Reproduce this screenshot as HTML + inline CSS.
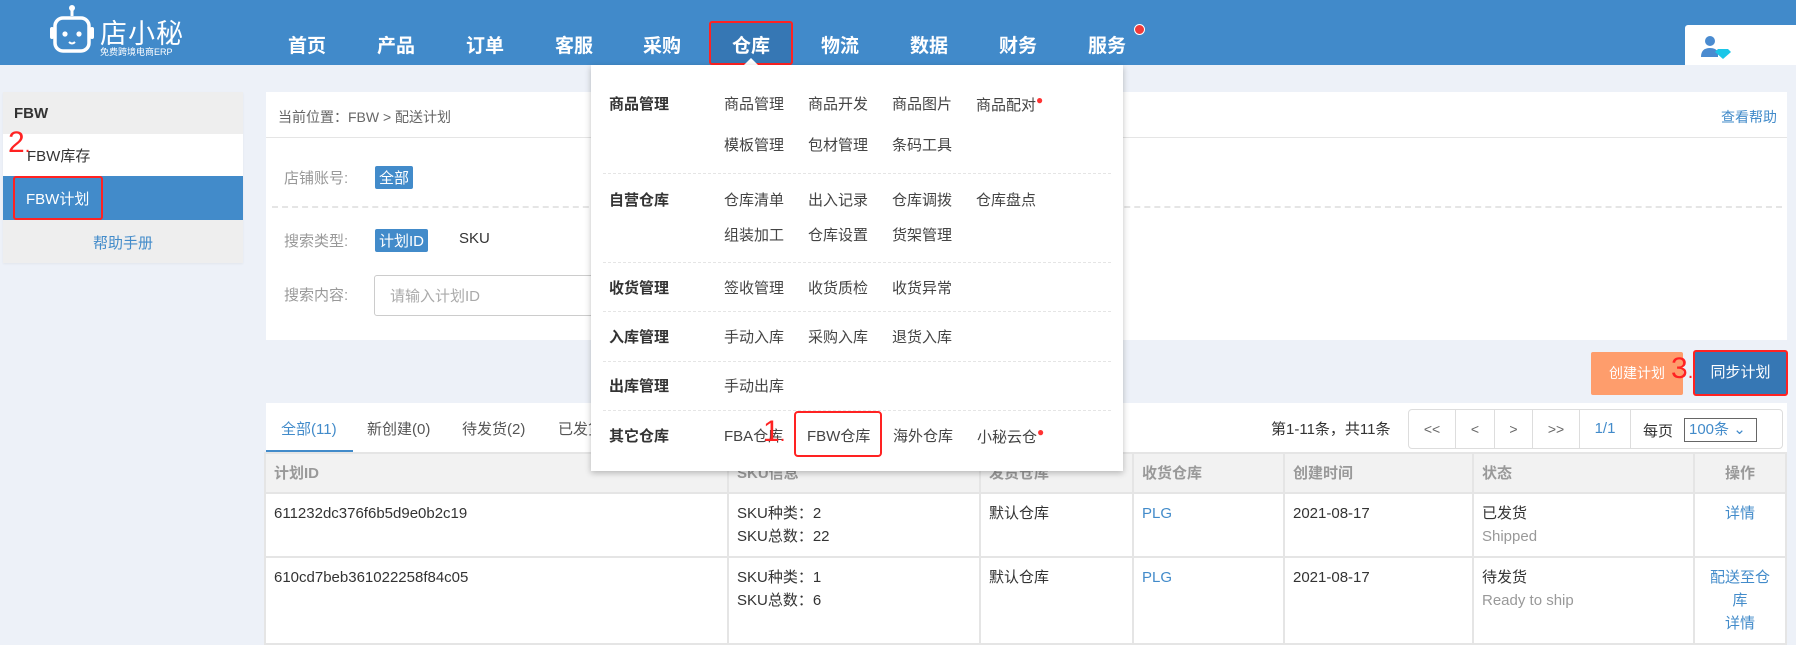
<!DOCTYPE html>
<html><head><meta charset="utf-8"><style>
*{margin:0;padding:0;box-sizing:border-box}
body{width:1796px;height:643px;overflow:hidden;background:#edf1f8;font-family:"Liberation Sans","Noto Sans CJK SC",sans-serif;font-size:15px;color:#333;position:relative}
.a{position:absolute;white-space:nowrap}
#hd{position:absolute;left:0;top:0;width:1796px;height:65px;background:#418aca}
.nav{position:absolute;top:31px;color:#fff;font-weight:bold;font-size:19px;width:80px;text-align:center;transform:translateX(-40px)}
.lbl{color:#999}
.blue{color:#428bca}
.tag{background:#428bca;color:#fff;padding:1px 4px;border-radius:2px}
.dd{position:absolute;left:591px;top:65px;width:532px;height:406px;background:#fff;box-shadow:0 2px 6px rgba(0,0,0,.25);z-index:5}
.dd .c{position:absolute;font-weight:bold;left:18px;font-size:15px;color:#333}
.dd .i{position:absolute;font-size:15px;color:#444}
.dd .hr{position:absolute;left:12px;right:12px;border-top:1px dashed #e5e5e5}
.rd{color:#f22;font-size:30px;position:absolute;font-family:"Liberation Sans",sans-serif}
table{border-collapse:collapse}
.tb td,.tb th{border:2px solid #e5e5e5;vertical-align:top;text-align:left;font-weight:normal;padding:8px 8px}
</style></head><body>
<div id="hd">
 <svg class="a" style="left:48px;top:5px" width="50" height="52" viewBox="0 0 50 52"><line x1="24" y1="2" x2="24" y2="11" stroke="#fff" stroke-width="3"/><circle cx="24" cy="3" r="3" fill="#fff"/><rect x="7" y="13" width="34" height="33" rx="8" fill="none" stroke="#fff" stroke-width="3.5"/><rect x="2" y="22" width="4" height="12" rx="2" fill="#fff"/><rect x="42" y="22" width="4" height="12" rx="2" fill="#fff"/><circle cx="17" cy="29" r="2.6" fill="#fff"/><circle cx="31" cy="29" r="2.6" fill="#fff"/><path d="M21 37 q3 3 6 0" stroke="#fff" stroke-width="2" fill="none"/></svg>
 <div class="a" style="left:100px;top:12px;color:#fff;font-size:27px;letter-spacing:1px">店小秘</div>
 <div class="a" style="left:100px;top:45px;color:#fff;font-size:9px">免费跨境电商ERP</div>
 <div class="a" style="left:709px;top:21px;width:84px;height:44px;background:#3677b4;border:2px solid #f22;border-radius:3px"></div>
 <div class="a" style="left:744px;top:58px;width:0;height:0;border-left:7px solid transparent;border-right:7px solid transparent;border-bottom:7px solid #fff"></div>
 <div class="nav" style="left:307px">首页</div><div class="nav" style="left:396px">产品</div><div class="nav" style="left:485px">订单</div><div class="nav" style="left:574px">客服</div><div class="nav" style="left:662px">采购</div><div class="nav" style="left:751px">仓库</div><div class="nav" style="left:840px">物流</div><div class="nav" style="left:929px">数据</div><div class="nav" style="left:1018px">财务</div><div class="nav" style="left:1107px">服务</div>
 <div class="a" style="left:1134px;top:24px;width:11px;height:11px;border-radius:50%;background:#f03a3a;border:1px solid #fff"></div>
 <div class="a" style="left:1685px;top:25px;width:111px;height:40px;background:#fff;border-radius:3px 0 0 0"></div>
 <svg class="a" style="left:1700px;top:35px" width="32" height="24" viewBox="0 0 32 24"><circle cx="10" cy="6" r="5" fill="#4a8bd0"/><path d="M1 22 q0-9 9-9 q6 0 8 4 l0 5z" fill="#4a8bd0"/><path d="M18 14 h10 l3 3 -8 7 -8-7z" fill="#1bc6e8"/></svg>
</div>

<!-- sidebar -->
<div class="a" style="left:3px;top:92px;width:240px;height:171px;background:#eee;box-shadow:0 1px 2px rgba(0,0,0,.05)">
 <div class="a" style="left:11px;top:13px;font-weight:bold;font-size:15px">FBW</div>
 <div class="a" style="left:0;top:42px;width:240px;height:42px;background:#fff"><span class="a" style="left:24px;top:11px;font-size:15px">FBW库存</span></div>
 <div class="a" style="left:0;top:84px;width:240px;height:44px;background:#428bca"><span class="a" style="left:10px;top:0;width:90px;height:44px;border:2px solid #f22;border-radius:3px"></span><span class="a" style="left:23px;top:12px;color:#fff;font-size:15px">FBW计划</span></div>
 <div class="a blue" style="left:0;top:140px;width:240px;text-align:center;font-size:15px">帮助手册</div>
</div>
<div class="rd" style="left:8px;top:128px;font-size:30px;line-height:30px">2<span style="font-size:20px">.</span></div>

<!-- top panel -->
<div class="a" style="left:266px;top:92px;width:1521px;height:248px;background:#fff">
 <div class="a" style="left:12px;top:15px;color:#666;font-size:14px">当前位置：FBW &gt; 配送计划</div>
 <div class="a blue" style="right:10px;top:15px;font-size:14px">查看帮助</div>
 <div class="a" style="left:0;top:45px;width:1521px;border-top:1px solid #e5e5e5"></div>
 <div class="a lbl" style="left:18px;top:75px">店铺账号:</div><div class="a tag" style="left:109px;top:74px">全部</div>
 <div class="a" style="left:6px;top:114px;width:1510px;border-top:2px dashed #e5e5e5"></div>
 <div class="a lbl" style="left:18px;top:138px">搜索类型:</div><div class="a tag" style="left:109px;top:137px">计划ID</div><div class="a" style="left:193px;top:138px">SKU</div>
 <div class="a lbl" style="left:18px;top:192px">搜索内容:</div>
 <div class="a" style="left:108px;top:183px;width:400px;height:41px;border:1px solid #ccc;border-radius:3px;color:#aaa;padding:9px 15px">请输入计划ID</div>
</div>

<div class="a" style="left:1591px;top:352px;width:92px;height:43px;background:#fe9d6c;color:#fff;text-align:center;line-height:43px;font-size:14px;border-radius:2px">创建计划</div>
<div class="a" style="left:1693px;top:350px;width:95px;height:46px;background:#3677b4;border:2px solid #f22;border-radius:3px;color:#fff;text-align:center;line-height:42px;font-size:15px">同步计划</div>
<div class="rd" style="left:1671px;top:354px;font-size:30px;line-height:30px">3<span style="font-size:20px">.</span></div>

<!-- table panel -->
<div class="a" style="left:266px;top:403px;width:1521px;height:240px;background:#fff">
 <div class="a blue" style="left:15px;top:15px">全部(11)</div><div class="a" style="left:0;top:47px;width:87px;height:3px;background:#428bca"></div>
 <div class="a" style="left:101px;top:15px;color:#555">新创建(0)</div>
 <div class="a" style="left:196px;top:15px;color:#555">待发货(2)</div>
 <div class="a" style="left:292px;top:15px;color:#555">已发货</div>
 <div class="a" style="left:0;top:49px;width:1521px;border-top:2px solid #e5e5e5"></div>
 <div class="a" style="left:1005px;top:15px">第1-11条，共11条</div>
 <div class="a" style="left:1142px;top:6px;width:375px;height:40px;border:1px solid #ddd;border-radius:4px;font-size:14px;color:#666">
  <span class="a" style="left:0;top:0;width:47px;height:38px;border-right:1px solid #ddd;text-align:center;line-height:38px">&lt;&lt;</span>
  <span class="a" style="left:47px;top:0;width:39px;height:38px;border-right:1px solid #ddd;text-align:center;line-height:38px">&lt;</span>
  <span class="a" style="left:86px;top:0;width:38px;height:38px;border-right:1px solid #ddd;text-align:center;line-height:38px">&gt;</span>
  <span class="a" style="left:124px;top:0;width:47px;height:38px;border-right:1px solid #ddd;text-align:center;line-height:38px">&gt;&gt;</span>
  <span class="a blue" style="left:171px;top:0;width:51px;height:38px;border-right:1px solid #ddd;text-align:center;line-height:38px;font-size:15px">1/1</span>
  <span class="a" style="left:234px;top:10px;color:#333;font-size:15px">每页</span>
  <span class="a blue" style="left:275px;top:8px;width:73px;height:24px;border:1px solid #666;font-size:15px;padding-left:4px;line-height:22px">100条 ⌄</span>
 </div>
 <table class="tb a" style="left:-2px;top:49px;width:1523px">
  <tr style="height:40px;background:#f2f2f2;color:#999;font-weight:bold"><th style="width:463px;font-weight:bold">计划ID</th><th style="width:252px;font-weight:bold">SKU信息</th><th style="width:153px;font-weight:bold">发货仓库</th><th style="width:151px;font-weight:bold">收货仓库</th><th style="width:189px;font-weight:bold">创建时间</th><th style="width:221px;font-weight:bold">状态</th><th style="text-align:center;font-weight:bold">操作</th></tr>
  <tr style="height:61px;line-height:23px"><td>611232dc376f6b5d9e0b2c19</td><td>SKU种类：2<br>SKU总数：22</td><td>默认仓库</td><td class="blue">PLG</td><td>2021-08-17</td><td>已发货<br><span style="color:#999">Shipped</span></td><td class="blue" style="text-align:center">详情</td></tr>
  <tr style="height:86px;line-height:23px"><td>610cd7beb361022258f84c05</td><td>SKU种类：1<br>SKU总数：6</td><td>默认仓库</td><td class="blue">PLG</td><td>2021-08-17</td><td>待发货<br><span style="color:#999">Ready to ship</span></td><td class="blue" style="text-align:center;padding:8px 2px">配送至仓<br>库<br>详情</td></tr>
 </table>
</div>

<!-- dropdown -->
<div class="dd">
 <div class="c" style="top:28px">商品管理</div>
 <div class="i" style="left:133px;top:28px">商品管理</div><div class="i" style="left:217px;top:28px">商品开发</div><div class="i" style="left:301px;top:28px">商品图片</div><div class="i" style="left:385px;top:28px">商品配对<sup style="color:#f33;font-size:12px">●</sup></div>
 <div class="i" style="left:133px;top:69px">模板管理</div><div class="i" style="left:217px;top:69px">包材管理</div><div class="i" style="left:301px;top:69px">条码工具</div>
 <div class="hr" style="top:108px"></div>
 <div class="c" style="top:124px">自营仓库</div>
 <div class="i" style="left:133px;top:124px">仓库清单</div><div class="i" style="left:217px;top:124px">出入记录</div><div class="i" style="left:301px;top:124px">仓库调拨</div><div class="i" style="left:385px;top:124px">仓库盘点</div>
 <div class="i" style="left:133px;top:159px">组装加工</div><div class="i" style="left:217px;top:159px">仓库设置</div><div class="i" style="left:301px;top:159px">货架管理</div>
 <div class="hr" style="top:197px"></div>
 <div class="c" style="top:212px">收货管理</div>
 <div class="i" style="left:133px;top:212px">签收管理</div><div class="i" style="left:217px;top:212px">收货质检</div><div class="i" style="left:301px;top:212px">收货异常</div>
 <div class="hr" style="top:246px"></div>
 <div class="c" style="top:261px">入库管理</div>
 <div class="i" style="left:133px;top:261px">手动入库</div><div class="i" style="left:217px;top:261px">采购入库</div><div class="i" style="left:301px;top:261px">退货入库</div>
 <div class="hr" style="top:296px"></div>
 <div class="c" style="top:310px">出库管理</div>
 <div class="i" style="left:133px;top:310px">手动出库</div>
 <div class="hr" style="top:345px"></div>
 <div class="c" style="top:360px">其它仓库</div>
 <div class="i" style="left:133px;top:360px">FBA仓库</div>
 <div class="a" style="left:203px;top:346px;width:88px;height:46px;border:2px solid #f22;border-radius:4px"></div>
 <div class="i" style="left:216px;top:360px">FBW仓库</div><div class="i" style="left:302px;top:360px">海外仓库</div><div class="i" style="left:386px;top:360px">小秘云仓<sup style="color:#f33;font-size:12px">●</sup></div>
 <div class="rd" style="left:172px;top:352px;line-height:30px">1<span style="font-size:20px">.</span></div>
</div>
</body></html>
